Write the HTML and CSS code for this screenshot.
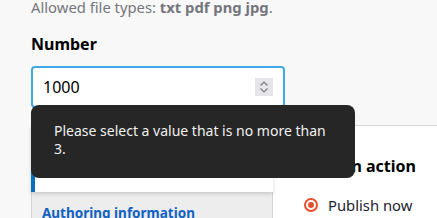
FILE: index.html
```html
<!DOCTYPE html>
<html lang="en">
<head>
    <meta charset="UTF-8">
    <meta name="viewport" content="width=device-width, initial-scale=1.0">
    <title>Edit content</title>
    <link rel="stylesheet" href="styles.css">
</head>
<body>
    <div class="page">
        <p class="description">Allowed file types: <strong>txt pdf png jpg</strong>.</p>

        <label class="label" for="number">Number</label>
        <div class="number-field">
            <input class="number-input" id="number" type="text" value="1000">
            <span class="spinner">
                <svg width="10" height="16" viewBox="0 0 10 16">
                    <path d="M1.5 6.5 L5 3 L8.5 6.5" fill="none" stroke="#7b7b82" stroke-width="1.2"/>
                    <path d="M1.5 9.5 L5 13 L8.5 9.5" fill="none" stroke="#7b7b82" stroke-width="1.2"/>
                </svg>
            </span>
        </div>

        <div class="vertical-tabs">
            <ul class="tabs-menu">
                <li class="tab-item is-selected"><a href="#">Revision information</a></li>
                <li class="tab-item"><a href="#">Authoring information</a></li>
            </ul>
            <div class="tabs-pane">
                <h3 class="pane-title">Revision action</h3>
                <label class="radio">
                    <span class="radio-mark"></span>
                    Publish now
                </label>
            </div>
        </div>

        <!-- browser validation bubble -->
        <div class="bubble">Please select a value that is no more than<br>3.</div>
    </div>
</body>
</html>
```

FILE: styles.css
```css
* {
    margin: 0;
    padding: 0;
    box-sizing: border-box;
}

body {
    height: 218px;
    background-color: #f8f8f8;
    font-family: "Noto Sans", "Open Sans", sans-serif;
    color: #222330;
    overflow: hidden;
}

.page {
    position: relative;
    padding-left: 31px;
}

.description {
    margin-top: -3px;
    font-size: 14.8px;
    line-height: 20px;
    color: #75767d;
}

.description strong {
    font-weight: bold;
}

.label {
    display: block;
    margin-top: 17px;
    font-size: 16px;
    font-weight: bold;
    line-height: 20px;
    color: #000;
}

.number-field {
    display: flex;
    align-items: center;
    width: 254px;
    height: 42px;
    margin-top: 12px;
    padding: 0 10px 0 10px;
    background: #fff;
    border: 2px solid #40a8e4;
    border-radius: 4px;
}

.number-input {
    flex: 1;
    min-width: 0;
    border: none;
    outline: none;
    background: transparent;
    font-family: inherit;
    font-size: 16px;
    color: #000;
}

.spinner {
    display: flex;
    align-items: center;
    justify-content: center;
    width: 18px;
    height: 18px;
    background: #e6e6ea;
}

.vertical-tabs {
    display: flex;
    margin-top: 17px;
}

.tabs-menu {
    list-style: none;
    width: 241px;
    flex-shrink: 0;
    background: #ededee;
    border-left: 1px solid #d4d4d8;
}

.tab-item a {
    display: block;
    padding: 11px 10px;
    font-size: 13.5px;
    font-weight: bold;
    line-height: 20px;
    color: #0f62c4;
    text-decoration: none;
}

.tab-item.is-selected {
    position: relative;
    height: 67px;
    margin-left: -1px;
    margin-right: -1px;
    background: #fff;
    border-left: 4px solid #0a6fc2;
    box-shadow: 0 2px 4px rgba(0, 0, 0, 0.15);
}

.tab-item.is-selected a {
    padding-top: 23px;
    color: #222330;
}

.tabs-pane {
    flex: 1;
    height: 93px;
    padding: 30px 0 0 22px;
    background: #fff;
    border-top: 1px solid #d4d4d8;
    border-left: 1px solid #d4d4d8;
}

.pane-title {
    font-size: 16px;
    font-weight: bold;
    line-height: 20px;
    color: #000;
}

.radio {
    display: flex;
    align-items: center;
    gap: 10px;
    margin-top: 19px;
    margin-left: 9px;
    font-size: 14.8px;
    line-height: 20px;
}

.radio-mark {
    display: flex;
    align-items: center;
    justify-content: center;
    width: 14px;
    height: 14px;
    border: 2px solid #e5522f;
    border-radius: 50%;
}

.radio-mark::after {
    content: "";
    width: 6px;
    height: 6px;
    border-radius: 50%;
    background: #e5522f;
}

.bubble {
    position: absolute;
    left: 31px;
    top: 108px;
    width: 324px;
    height: 73px;
    padding: 17px 0 0 23px;
    background: #262626;
    border-radius: 8px;
    font-size: 14px;
    line-height: 18px;
    color: #f0f0f0;
}
```
